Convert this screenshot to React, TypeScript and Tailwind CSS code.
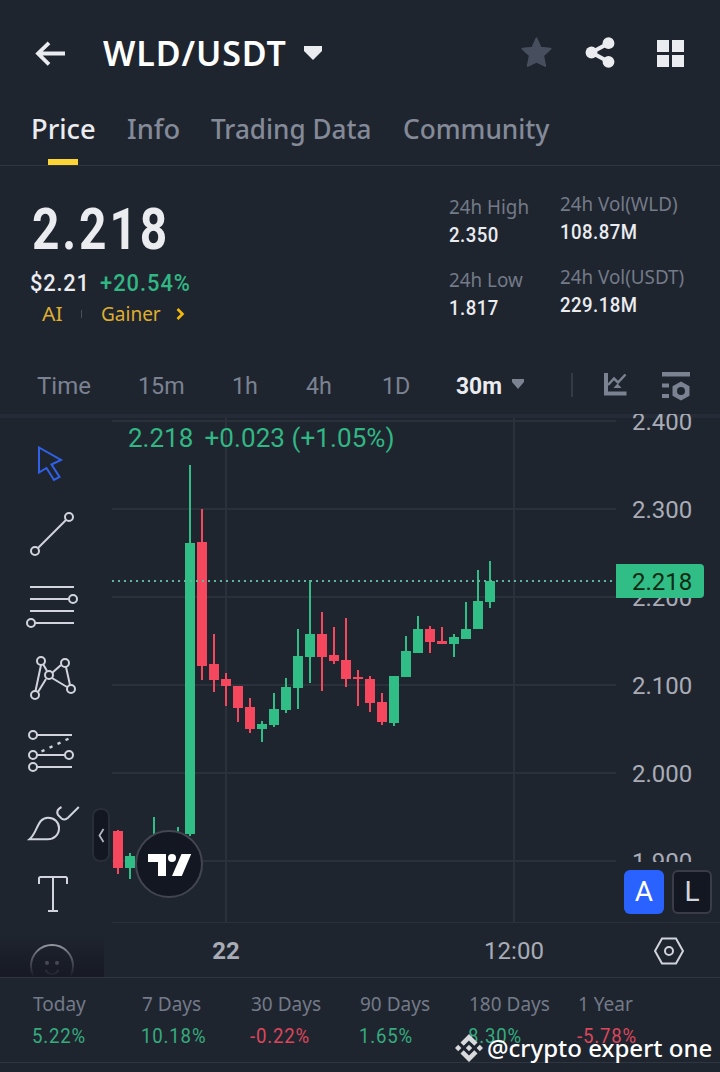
import { clsx } from "clsx";

const UP = "#31bd86";
const DOWN = "#f5475d";

// x, high, open/close top, open/close bottom, low, rising
const candles: [number, number, number, number, number, boolean][] = [
    [118, 830, 831, 868, 874, false],
    [130, 853, 856, 868, 879, true],
    [154, 817, 845, 860, 862, true],
    [178, 827, 845, 860, 862, true],
    [190, 465, 543, 834, 836, true],
    [202, 509, 542, 666, 680, false],
    [214, 634, 664, 680, 692, false],
    [226, 673, 679, 686, 706, false],
    [238, 686, 686, 708, 722, false],
    [250, 698, 707, 729, 733, false],
    [262, 721, 724, 729, 742, true],
    [274, 693, 709, 725, 727, true],
    [286, 678, 687, 710, 713, true],
    [298, 629, 656, 688, 709, true],
    [310, 580, 634, 657, 683, true],
    [322, 612, 634, 657, 691, false],
    [334, 627, 655, 661, 664, false],
    [346, 618, 660, 679, 687, false],
    [358, 670, 677, 679, 706, false],
    [370, 676, 679, 703, 712, false],
    [382, 693, 702, 722, 725, false],
    [394, 676, 676, 723, 726, true],
    [406, 636, 651, 677, 677, true],
    [418, 616, 629, 653, 653, true],
    [430, 626, 629, 642, 653, false],
    [442, 627, 641, 644, 644, false],
    [454, 634, 637, 644, 657, true],
    [466, 602, 629, 639, 639, true],
    [478, 570, 601, 629, 629, true],
    [490, 561, 581, 602, 608, true],
];

const prices = ["2.400", "2.300", "2.200", "2.100", "2.000", "1.900"];

const periods = [
    { label: "Today", value: "5.22%" },
    { label: "7 Days", value: "10.18%" },
    { label: "30 Days", value: "-0.22%" },
    { label: "90 Days", value: "1.65%" },
    { label: "180 Days", value: "8.30%" },
    { label: "1 Year", value: "-5.78%" },
];

function Header() {
    return (
        <header className="flex h-[107px] items-center pl-[34px] pr-[36px]">
            <svg width="32" height="26" viewBox="0 0 32 26" fill="none" stroke="#eaecef" strokeWidth="3.8">
                <path d="M31 12.5H4M15 1.8L4 12.5l11 10.8" />
            </svg>
            <h1 className="ml-[37px] w-[186px] whitespace-nowrap font-['Noto_Sans',sans-serif] text-[34.5px] font-semibold leading-none text-white">
                <span className="inline-block origin-left scale-x-[0.985] tracking-[0.9px]">WLD/USDT</span>
            </h1>
            <svg className="mb-0.5 ml-[15px]" width="18" height="14" viewBox="0 0 18 14" fill="#eaecef">
                <path d="M0 0h18v5L9 14 0 5z" />
            </svg>
            <div className="ml-auto flex items-center">
                <svg className="mb-0.5" width="31" height="31" viewBox="0 0 31 31" fill="#474f5e" stroke="#474f5e" strokeWidth="2" strokeLinejoin="round">
                    <path d="M15.500 1.500l4 9.200 10 1.100-7.400 6.700 2.100 10.400-8.700-4.300-8.700 4.300 2.100-10.400-7.400-6.700 10-1.100z" />
                </svg>
                <svg className="mb-0.5 ml-[33px]" width="30" height="31" viewBox="0 0 30 31" fill="#eaecef">
                    <path d="M23.500 6.200L6.500 15.500l17 9.300" fill="none" stroke="#eaecef" strokeWidth="4" />
                    <circle cx="23.500" cy="6.200" r="5.900" />
                    <circle cx="6.500" cy="15.500" r="5.900" />
                    <circle cx="23.500" cy="24.800" r="5.900" />
                </svg>
                <div className="mb-px ml-[42px] grid grid-cols-2 gap-[3px]">
                    {[0, 1, 2, 3].map((i) => (
                        <span key={i} className="h-3 w-3 bg-[#eaecef]" />
                    ))}
                </div>
            </div>
        </header>
    );
}

function Tabs() {
    return (
        <nav className="flex h-[59px] border-b border-[#2f3641] pl-[31px] pt-px font-['Noto_Sans',sans-serif] text-[26.5px] font-medium text-[#848a98]">
            <div className="relative w-[96px] text-[#eaecef]">
                <span className="block origin-left scale-x-[1.03] leading-[42px]">Price</span>
                <span className="absolute bottom-0 left-[17px] h-1.5 w-[30px] bg-[#fcd535]" />
            </div>
            <span className="w-[84px] origin-left scale-x-[1.03] leading-[42px]">Info</span>
            <span className="w-[192px] origin-left scale-x-[0.985] whitespace-nowrap leading-[42px]">Trading Data</span>
            <span className="origin-left scale-x-[0.99] leading-[42px]">Community</span>
        </nav>
    );
}

function Metric({ label, value }: { label: string; value: string }) {
    return (
        <div className="h-[72.5px] whitespace-nowrap">
            <div className="origin-left scale-x-[0.965] font-['Noto_Sans',sans-serif] text-[19.5px] leading-[28px] text-[#737a88]">{label}</div>
            <div className="origin-left scale-x-[0.93] text-[20px] font-medium leading-[29px] tracking-[0.5px] text-[#eaecef]">{value}</div>
        </div>
    );
}

function Summary() {
    return (
        <section className="flex h-[190px] pl-8">
            <div className="w-[417px] pt-[31px]">
                <div className="flex h-[65px] origin-left scale-x-[0.84] items-center text-[57px] font-bold leading-none tracking-[3.4px] text-[#eaecef]">
                    2.218
                </div>
                <div className="mt-[7px] flex h-7 items-center text-[24px] font-medium leading-none">
                    <span className="-ml-0.5 w-[70px] origin-left scale-x-[0.91] tracking-[0.9px] text-[#eaecef]">$2.21</span>
                    <span className="origin-left scale-x-[0.91] tracking-[1.1px] text-[#31b784]">+20.54%</span>
                </div>
                <div className="mt-0.5 flex h-[30px] items-center pl-[10px] font-['Noto_Sans',sans-serif] text-[20px] text-[#dfae30]">
                    <span className="w-[39px] origin-left scale-x-105">AI</span>
                    <span className="mr-[19px] h-2 w-px bg-[#474f5e]" />
                    <span className="w-[75px] origin-left scale-x-[0.95]">Gainer</span>
                    <svg width="9" height="12" viewBox="0 0 9 12" fill="none" stroke="#f0b90b" strokeWidth="2.600">
                        <path d="M1.500 1l5 5-5 5" />
                    </svg>
                </div>
            </div>
            <div className="w-[111px] pt-[27px]">
                <Metric label="24h High" value="2.350" />
                <Metric label="24h Low" value="1.817" />
            </div>
            <div className="pt-[24px]">
                <Metric label="24h Vol(WLD)" value="108.87M" />
                <Metric label="24h Vol(USDT)" value="229.18M" />
            </div>
        </section>
    );
}

function Intervals() {
    return (
        <div className="flex h-[62px] items-center border-b-4 border-[#262c37] pl-[37px] pt-0.5 text-[24px] text-[#7b8291]">
            <span className="w-[101px]">Time</span>
            <span className="w-[94px] origin-left scale-x-[0.97]">15m</span>
            <span className="w-[74px] origin-left scale-x-[0.97]">1h</span>
            <span className="w-[76px] origin-left scale-x-[0.97]">4h</span>
            <span className="w-[74px] origin-left scale-x-[0.97]">1D</span>
            <span className="w-[56px] text-[24px] font-bold text-[#eaecef]">
                <span className="inline-block origin-left scale-x-[0.95]">30m</span>
            </span>
            <svg className="mb-1" width="12" height="10" viewBox="0 0 12 10" fill="#7b8291">
                <path d="M0 0h12v3L6 10 0 3z" />
            </svg>
            <span className="mb-0.5 ml-[47px] mr-[31px] h-6 w-0.5 bg-[#343b47]" />
            <svg className="mb-1" width="23" height="24" viewBox="0 0 23 24" fill="none" stroke="#7b8291">
                <path d="M2 1v20.500h20.500" strokeWidth="4" />
                <path d="M4 13l6-6.500 4 4L21.500 2.500" strokeWidth="2.500" />
                <path d="M13.500 11.500l4 4.500h-8z" fill="#7b8291" stroke="none" />
            </svg>
            <svg className="ml-[34px]" width="29" height="29" viewBox="0 0 29 29" fill="#7b8291">
                <path d="M1 0h28v4.500H1zM1 11.500h7v4H1zM1 22h7v4H1z" />
                <path fillRule="evenodd" d="M20 9.500l8.500 4.800v9.400L20 28.500l-8.500-4.800v-9.400zM20 15a4 4 0 100 8 4 4 0 000-8z" />
            </svg>
        </div>
    );
}

function Tool({ children, color = "#d1d4dc" }: { children: React.ReactNode; color?: string }) {
    return (
        <svg className="h-[72px] w-[104px] shrink-0" viewBox="0 0 104 72" fill="none" stroke={color} strokeWidth="2">
            {children}
        </svg>
    );
}

function Toolbar() {
    return (
        <div className="relative flex h-[559px] w-[112px] flex-col overflow-hidden pt-[9px]">
            <Tool color="#2f62e8">
                <path d="M39 20.500L61 33 51.500 37.500 59.500 50 54 53 46.500 41 39 45.500z" />
            </Tool>
            <Tool>
                <circle cx="35" cy="52" r="4" />
                <circle cx="69" cy="18" r="4" />
                <path d="M38 49l28-28" />
            </Tool>
            <Tool>
                <path d="M30 16h44M30 28h39M30 40h44M35 52h39" />
                <circle cx="73" cy="28" r="4" />
                <circle cx="31" cy="52" r="4" />
            </Tool>
            <Tool>
                <path d="M41 22l-5.500 26M43 21l4 7M38 49l8-13M52 30l9-8M66 24l4 18M52 35l15 9" />
                <circle cx="41" cy="18" r="4" />
                <circle cx="65" cy="20" r="4" />
                <circle cx="49" cy="32" r="4" />
                <circle cx="71" cy="46" r="4" />
                <circle cx="35" cy="52" r="4" />
            </Tool>
            <Tool>
                <path d="M37 20h35M37 40h28M37 52h35" />
                <circle cx="33" cy="20" r="4" />
                <circle cx="33" cy="40" r="4" />
                <circle cx="69" cy="40" r="4" />
                <circle cx="33" cy="52" r="4" />
                <path d="M41.500 36.400l3-1.200M49.500 32.600l3-1.200M57.500 28.800l3-1.200M65.500 25l3-1.200" strokeWidth="2.400" />
            </Tool>
            <Tool>
                <path d="M29.500 52.300C38 45 37 30.800 48 30.800c6.500 0 11 4.200 11 10.200 0 7-5 11.300-11.500 11.300z" />
                <path d="M61.500 20c-4 2-5 5-3.500 8l3.500 3.500c2 1.500 4.500 1.200 6.500-.7L78.800 20" />
            </Tool>
            <Tool>
                <path d="M39 25v-5.500q0-1.500 1.500-1.500h25q1.500 0 1.500 1.500V25M53 18v34M48 52h10" />
            </Tool>
            <Tool>
                <circle cx="52" cy="35" r="21" />
                <circle cx="47" cy="32" r="2" fill="#d1d4dc" stroke="none" />
                <circle cx="57" cy="32" r="2" fill="#d1d4dc" stroke="none" />
                <path d="M46 39q1 4 6 4t6-4" />
            </Tool>
            <div className="absolute bottom-0 left-0 h-[44px] w-[104px] bg-gradient-to-b from-[#171a24]/0 via-[#171a24]/60 to-[#171a24]" />
        </div>
    );
}

function Plot() {
    return (
        <svg className="block h-[505px] w-[504px]" viewBox="112 418 504 505" fontFamily="Roboto, sans-serif">
            <g fill="#2b313b">
                {prices.map((p, i) => (
                    <rect key={p} x="112" y={420 + i * 88} width="504" height="2" />
                ))}
                <rect x="225" y="418" width="2" height="504" />
                <rect x="513" y="418" width="2" height="504" />
                <rect x="112" y="922" width="504" height="2" />
            </g>
            {candles.map(([x, high, top, bottom, low, rising]) => (
                <g key={x} fill={rising ? UP : DOWN}>
                    <rect x={x - 1} y={high} width="2" height={low - high} />
                    <rect x={x - 5} y={top} width="10" height={bottom - top} />
                </g>
            ))}
            <path d="M112 581h501" stroke="#5fb79b" strokeWidth="2" strokeDasharray="2 4" />
            <g fontSize="26" fill="#31b784">
                <text x="128" y="447">2.218</text>
                <text x="204.500" y="447" textLength="190">+0.023 (+1.05%)</text>
            </g>
            <circle cx="169" cy="864" r="33" fill="#131722" stroke="#434651" strokeWidth="2" />
            <g fill="#fff">
                <path d="M148 854h18v22h-8v-14h-10zM181.500 854h9.700l-9.400 22h-9.800z" />
                <circle cx="172" cy="858" r="4" />
            </g>
        </svg>
    );
}

function PriceAxis() {
    return (
        <div className="relative -mt-1 h-[509px] border-b border-[#2b313b] text-[24px] text-[#a9acb6]">
            <div className="h-[448px] overflow-hidden">
                <div className="-mt-[36px] pl-4">
                    {prices.map((p) => (
                        <div key={p} className="h-[88px] leading-[88px]">{p}</div>
                    ))}
                </div>
            </div>
            <div className="absolute left-0 top-[150px] h-[34px] w-[88px] rounded-r-[4px] bg-[#31bd86] pl-4 leading-[36px] text-[#0b2a12]">
                2.218
            </div>
            <div className="mt-2 flex gap-2 pl-2 text-[28px] leading-[44px]">
                <span className="h-11 w-10 rounded-md bg-[#2962ff] text-center text-white">A</span>
                <span className="h-11 w-10 rounded-md border-2 border-[#3a3d48] bg-[#131722] text-center leading-[40px] text-[#d1d4dc]">L</span>
            </div>
        </div>
    );
}

function Chart() {
    return (
        <section className="relative flex h-[559px]">
            <Toolbar />
            <div className="w-[504px]">
                <Plot />
                <div className="flex h-[54px] items-center pt-0.5 text-[24px] text-[#a9acb6]">
                    <span className="w-[228px] text-center font-bold">22</span>
                    <span className="ml-[114px] w-[120px] text-center">12:00</span>
                </div>
            </div>
            <div className="w-[104px]">
                <PriceAxis />
                <svg className="ml-[38px] mt-[14px]" width="30" height="28" viewBox="0 0 30 28" fill="none" stroke="#d1d4dc" strokeWidth="2">
                    <path d="M8 1.500h14L29 14l-7 12.500H8L1 14z" />
                    <circle cx="15" cy="14" r="4" />
                </svg>
            </div>
            {/* Collapse handle between the toolbar and the plot */}
            <button className="absolute left-[92px] top-[390px] flex h-[54px] w-[18px] items-center justify-center rounded-lg border-2 border-[#282d38] bg-[#131722]">
                <svg className="shrink-0" width="7" height="15" viewBox="0 0 7 15" fill="none" stroke="#b2b5be" strokeWidth="1.800">
                    <path d="M5.500 1L1.500 7.500l4 6.500" />
                </svg>
            </button>
        </section>
    );
}

function Performance() {
    return (
        <section className="flex h-[86px] border-y border-[#2f3641] pl-[33px] pt-3">
            {periods.map(({ label, value }) => (
                <div key={label} className="w-[109px] shrink-0 whitespace-nowrap">
                    <div className="font-['Noto_Sans',sans-serif] text-[19px] leading-[28px] text-[#737a88]">{label}</div>
                    <div
                        className={clsx(
                            "-ml-px origin-left scale-x-[0.93] text-[20px] leading-[37px] tracking-[0.9px]",
                            value.startsWith("-") ? "text-[#dc465c]" : "text-[#35ab7e]"
                        )}
                    >
                        {value}
                    </div>
                </div>
            ))}
        </section>
    );
}

export default function App() {
    return (
        <div className="relative h-[1072px] w-[720px] overflow-hidden bg-[#1f252f] font-[Roboto,sans-serif]">
            <Header />
            <Tabs />
            <Summary />
            <Intervals />
            <Chart />
            <Performance />
            {/* Author mark laid over the page */}
            <div className="absolute left-[455px] top-[1032px] flex items-center gap-1 whitespace-nowrap font-['Noto_Sans',sans-serif] text-[24px] font-medium leading-[32px] text-white">
                <svg width="28" height="28" viewBox="0 0 28 28" fill="#d9dadc">
                    <path d="M14 0l8.500 8.500-3.200 3.200L14 6.400l-5.300 5.300-3.200-3.200zM14 28l-8.500-8.500 3.200-3.200 5.300 5.300 5.300-5.300 3.200 3.200zM3.200 10.800L6.400 14l-3.200 3.200L0 14zM24.800 10.800L28 14l-3.200 3.200L21.600 14zM14 10.800l3.200 3.200-3.200 3.200-3.200-3.200z" />
                </svg>
                <span>@crypto expert one</span>
            </div>
        </div>
    );
}
